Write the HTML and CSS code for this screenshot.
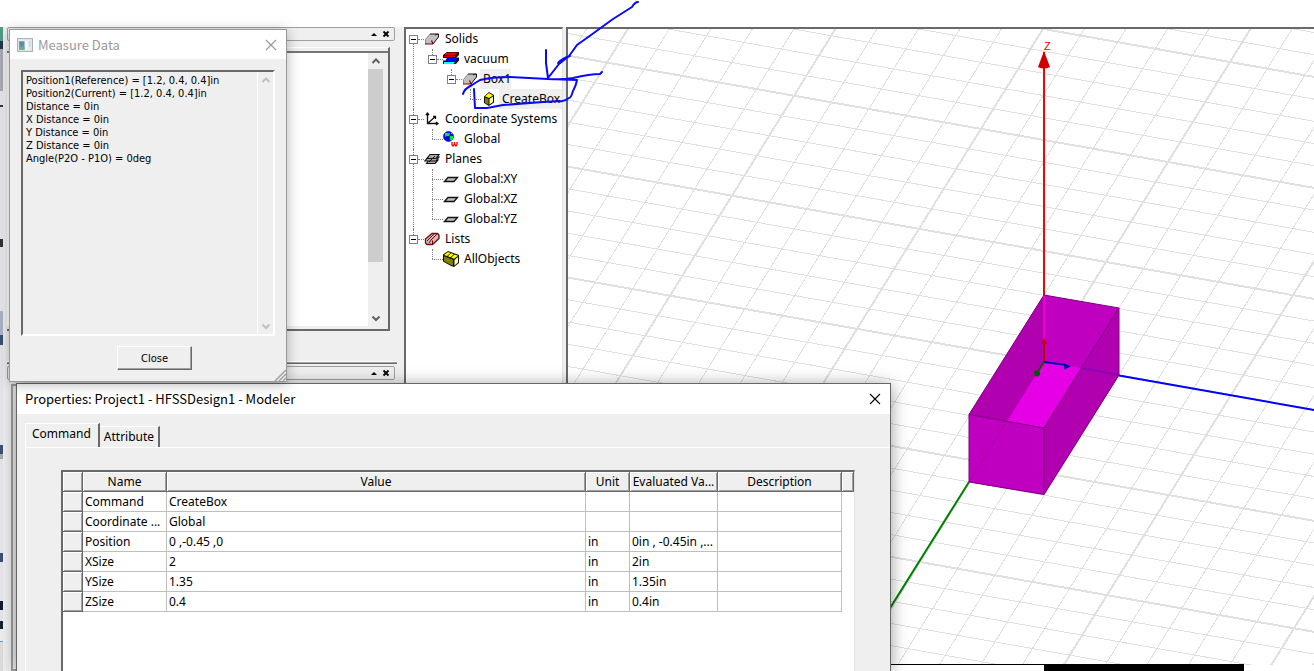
FILE: index.html
```html
<!DOCTYPE html>
<html lang="en">
<head>
<meta charset="utf-8">
<title>HFSSDesign1 - Modeler</title>
<link rel="stylesheet" href="styles.css">
</head>
<body>
<svg class="symbols" aria-hidden="true">
  <symbol id="i-solid" viewBox="0 0 16 16"><path d="M1.500 8.500 6 3H14.500V6L9 13H1.500z" fill="#c0c0c0"/><path d="M1.500 13V8.500L6 3" fill="none" stroke="#888"/><path d="M6 3H14.500V6L9 13" fill="none" stroke="#111"/><path d="M1 13H9M9 13 7.500 9.500M14 3 11 4" fill="none" stroke="#800000" stroke-width="1.200"/></symbol>
  <symbol id="i-material" viewBox="0 0 16 16"><path d="M4 1h12v3l-3 3H0V4z" fill="#111"/><path d="M4 1.500h10.500l-2 2.500H1.500z" fill="#e00"/><path d="M1 4.500h11V6H1z" fill="#c00"/><path d="M4 6.500h12v3L13 13H0V9.500h3z" fill="#111"/><path d="M4 7h10.500l-3 3.500H2z" fill="#00f"/><path d="M1 11h11l-1.500 2H1z" fill="#0ff"/></symbol>
  <symbol id="i-createbox" viewBox="0 0 16 16"><path d="M3 5.500 8 1l5 3v7.500L8 15l-5-3z" fill="#111"/><path d="M4 5.300 8 2l4 2.500L8 7z" fill="#ff0"/><path d="m4 6.500 3.500 1.500v5.500L4 12z" fill="#808000"/><path d="m8.500 8 3.500-2.500V11l-3.500 2.500z" fill="#ffffa0"/></symbol>
  <symbol id="i-axes" viewBox="0 0 16 16"><path d="M3.500 2v10.500H14M3.500 12.500l8-7M2 4l1.500-2L5 4M12 11l2 1.500-2 1.500M9 5.500h2.500V8" fill="none" stroke="#111" stroke-width="1.300"/></symbol>
  <symbol id="i-globe" viewBox="0 0 16 16"><circle cx="5.500" cy="5.500" r="5" fill="#00f" stroke="#00a" stroke-width=".6"/><path d="M2 2h5L6 5H4L2 6zM7 5h3v2l-1 3-2-1zM8 1l2 2H8z" fill="#0e2"/><path d="M9 11v3l1 1 1.500-2 1.500 2 1-1v-3M11.500 11v2" fill="none" stroke="#e00" stroke-width="1.300"/></symbol>
  <symbol id="i-planes" viewBox="0 0 16 16"><path d="M2.500 12.500 5 9h9l-3 3.500z" fill="#aaa" stroke="#111" stroke-width="1.200"/><path d="M.8 10 4 6h11l-3 4z" fill="#aaa" stroke="#111" stroke-width="1.200"/><path d="m3 7.500 3-4h9l-3 4z" fill="#aaa" stroke="#111" stroke-width="1.200"/><path d="m5 11 6-6" stroke="#111"/></symbol>
  <symbol id="i-plane" viewBox="0 0 16 16"><path d="M1.500 10.500 5 6.500h9.500L11 10.500z" fill="#c0c0c0" stroke="#111" stroke-width="1.300"/></symbol>
  <symbol id="i-lists" viewBox="0 0 16 16"><path d="M1.500 8 8 2.500h5.500L15 4v3.500L8.500 13.500H3L1.500 12z" fill="#c0c0c0" stroke="#800000" stroke-width="1.300"/><path d="m3 10 7-7M5 12l2-3 6-6M8.500 13V9.500" stroke="#800000" fill="none"/></symbol>
  <symbol id="i-objects" viewBox="0 0 16 16"><path d="M0 3.500 5 0l11 4v8l-5 4-3-1-8-4.500z" fill="#111"/><path d="M1 4 5 1l2.500 1L4 5zM4.800 5.300 8.200 2.300l2.500 1L7.500 6.300zM8.300 6.600 11.500 3.600l3.500 1.200L11 7.800z" fill="#ff0"/><path d="m1 5.200 9 3.600V14.500L8 14 1 10z" fill="#808000"/><path d="m11.500 9 3.500-3v5.500l-3.500 3z" fill="#ffffa0"/></symbol>
  <symbol id="i-up" viewBox="0 0 16 16"><path d="m4.500 10 3.500-3.500 3.500 3.500" fill="none" stroke="currentColor" stroke-width="2"/></symbol>
  <symbol id="i-down" viewBox="0 0 16 16"><path d="m4.500 6.500 3.500 3.500 3.500-3.500" fill="none" stroke="currentColor" stroke-width="2"/></symbol>
  <symbol id="i-close" viewBox="0 0 12 12"><path d="m1 1 10 10M11 1 1 11" fill="none" stroke="currentColor" stroke-width="1.100"/></symbol>
  <symbol id="i-pin" viewBox="0 0 8 8"><path d="M1 6h6L4 3z" fill="#000"/></symbol>
  <symbol id="i-dockclose" viewBox="0 0 8 8"><path d="m1.500 1.500 5 5m0-5-5 5" stroke="#000" stroke-width="1.800"/></symbol>
</svg>

<div class="app">
  <aside class="dock">
    <div class="edge" aria-hidden="true"></div>
    <div class="dock-column">
      <header class="dock-head">
        <button class="dock-button" aria-label="Collapse"><svg><use href="#i-pin"/></svg></button>
        <button class="dock-button" aria-label="Close panel"><svg><use href="#i-dockclose"/></svg></button>
      </header>
      <section class="list-panel">
        <div class="scrollbar">
          <svg><use href="#i-up"/></svg>
          <span class="thumb"></span>
          <svg><use href="#i-down"/></svg>
        </div>
      </section>
      <hr class="splitter">
      <header class="dock-head">
        <button class="dock-button" aria-label="Collapse"><svg><use href="#i-pin"/></svg></button>
        <button class="dock-button" aria-label="Close panel"><svg><use href="#i-dockclose"/></svg></button>
      </header>
      <section class="lower-panel"></section>
    </div>
  </aside>

  <nav class="model-tree" aria-label="Model">
    <ul class="tree">
      <li><div class="row"><button class="toggle" aria-label="Collapse Solids"></button><svg class="icon"><use href="#i-solid"/></svg><span class="label">Solids</span></div>
        <ul>
          <li><div class="row"><button class="toggle" aria-label="Collapse vacuum"></button><svg class="icon"><use href="#i-material"/></svg><span class="label">vacuum</span></div>
            <ul>
              <li><div class="row"><button class="toggle" aria-label="Collapse Box1"></button><svg class="icon"><use href="#i-solid"/></svg><span class="label selected">Box1</span></div>
                <ul>
                  <li><div class="row"><span class="branch"></span><svg class="icon"><use href="#i-createbox"/></svg><span class="label selected">CreateBox</span></div></li>
                </ul>
              </li>
            </ul>
          </li>
        </ul>
      </li>
      <li><div class="row"><button class="toggle" aria-label="Collapse Coordinate Systems"></button><svg class="icon"><use href="#i-axes"/></svg><span class="label">Coordinate Systems</span></div>
        <ul>
          <li><div class="row"><span class="branch"></span><svg class="icon"><use href="#i-globe"/></svg><span class="label">Global</span></div></li>
        </ul>
      </li>
      <li><div class="row"><button class="toggle" aria-label="Collapse Planes"></button><svg class="icon"><use href="#i-planes"/></svg><span class="label">Planes</span></div>
        <ul>
          <li><div class="row"><span class="branch"></span><svg class="icon"><use href="#i-plane"/></svg><span class="label">Global:XY</span></div></li>
          <li><div class="row"><span class="branch"></span><svg class="icon"><use href="#i-plane"/></svg><span class="label">Global:XZ</span></div></li>
          <li><div class="row"><span class="branch"></span><svg class="icon"><use href="#i-plane"/></svg><span class="label">Global:YZ</span></div></li>
        </ul>
      </li>
      <li><div class="row"><button class="toggle" aria-label="Collapse Lists"></button><svg class="icon"><use href="#i-lists"/></svg><span class="label">Lists</span></div>
        <ul>
          <li><div class="row"><span class="branch"></span><svg class="icon"><use href="#i-objects"/></svg><span class="label">AllObjects</span></div></li>
        </ul>
      </li>
    </ul>
  </nav>

  <main class="viewport">
    <svg class="scene" role="img" aria-label="Box on the modeling grid">
      <g transform="translate(-568 -29)">
        <g id="grid" shape-rendering="crispEdges"></g>
        <path d="M1044 295V52" stroke="#f00" stroke-width="2"/>
        <path d="M1044 51l-6 16q6 3 12 0z" fill="#d00000"/>
        <text class="axis-name" x="1044" y="50">Z</text>
        <path d="M1119 375.500 1500 443" stroke="#00f" stroke-width="2"/>
        <path d="M969 482 850 672" stroke="#008000" stroke-width="2"/>
        <path d="M1044 295 1119 308V375L1044 494.500 969 482V414.500z" fill="#c000c0"/>
        <path d="M1044 295V362L969 482V414.500z" fill="#b000b0"/>
        <path d="M1119 308V375L1044 494.500V428z" fill="#b000b0"/>
        <path d="M1044 362 1081 368 1044 428 1007 421.500z" fill="#e600e6"/>
        <path d="M969 414.500 1044 428V494.500L969 482z" fill="#c000c0"/>
        <path d="M969 482 1007 421" stroke="#a800a8" fill="none"/>
        <path d="M1081 368 1119 375" stroke="#9000b8" stroke-width="2"/>
        <path d="M1044 295 1119 308V375L1044 494.500 969 482V414.500zM969 414.500 1044 428V494.500M1044 428 1119 308" fill="none" stroke="#800080"/>
        <path d="M1044 296V340" stroke="#f000d0" stroke-width="2"/>
        <path d="M1044 362V344" stroke="#b00000" stroke-width="2"/><path d="M1044 338l-3 6h6z" fill="#d00000"/>
        <path d="m1044 362 22 3" stroke="#0000c0" stroke-width="2"/><path d="m1071 366.500-7-3v6z" fill="#0000b0"/>
        <path d="m1044 362-7 11" stroke="#006000" stroke-width="2"/><circle cx="1037" cy="373.500" r="3" fill="#005800"/>
        <path d="M567 665H1314V671H567z" fill="#fff"/>
        <path d="M567 664H1244V665H567z"/>
        <path d="M1044 664H1244V680H1044z"/>
      </g>
    </svg>
  </main>
</div>

<section class="window properties" role="dialog" aria-labelledby="prop-title">
  <header class="title-bar"><h2 id="prop-title">Properties: Project1 - HFSSDesign1 - Modeler</h2><button class="close" aria-label="Close properties"><svg><use href="#i-close"/></svg></button></header>
  <div class="tabs" role="tablist">
    <button class="tab active" role="tab" aria-selected="true">Command</button>
    <button class="tab" role="tab" aria-selected="false">Attribute</button>
  </div>
  <div class="tab-page">
    <div class="grid-box">
      <table>
        <colgroup><col class="c-head"><col class="c-name"><col><col class="c-unit"><col class="c-eval"><col class="c-desc"><col class="c-end"></colgroup>
        <thead><tr><th></th><th>Name</th><th>Value</th><th>Unit</th><th>Evaluated Va...</th><th>Description</th><th></th></tr></thead>
        <tbody>
          <tr><th></th><td>Command</td><td>CreateBox</td><td></td><td></td><td></td><td></td></tr>
          <tr><th></th><td>Coordinate ...</td><td>Global</td><td></td><td></td><td></td><td></td></tr>
          <tr><th></th><td>Position</td><td>0 ,-0.45 ,0</td><td>in</td><td>0in , -0.45in ,...</td><td></td><td></td></tr>
          <tr><th></th><td>XSize</td><td>2</td><td>in</td><td>2in</td><td></td><td></td></tr>
          <tr><th></th><td>YSize</td><td>1.35</td><td>in</td><td>1.35in</td><td></td><td></td></tr>
          <tr><th></th><td>ZSize</td><td>0.4</td><td>in</td><td>0.4in</td><td></td><td></td></tr>
        </tbody>
      </table>
    </div>
  </div>
</section>

<section class="window measure" role="dialog" aria-labelledby="measure-title">
  <header class="title-bar">
    <svg class="app-icon" viewBox="0 0 15 13"><rect x=".5" y=".5" width="14" height="12" fill="#e8ecf2" stroke="#a8b0b8"/><path d="M2 3h5v8H2z" fill="#5b8fa0"/><path d="M2 8h5v3H2z" fill="#6fae8e"/><path d="M8 3h2v8H8z" fill="#fff"/><path d="M11 3h2v5h-2z" fill="#d0d8d8"/></svg>
    <h2 id="measure-title">Measure Data</h2><button class="close" aria-label="Close measure data"><svg><use href="#i-close"/></svg></button>
  </header>
  <div class="measure-body">
    <div class="readout">
      <textarea readonly aria-label="Measurements">Position1(Reference) = [1.2, 0.4, 0.4]in
Position2(Current) = [1.2, 0.4, 0.4]in
Distance = 0in
X Distance = 0in
Y Distance = 0in
Z Distance = 0in
Angle(P2O - P1O) = 0deg</textarea>
      <div class="scrollbar disabled"><svg><use href="#i-up"/></svg><svg><use href="#i-down"/></svg></div>
    </div>
    <button class="push">Close</button>
  </div>
  <svg class="grip" viewBox="0 0 12 12"><path d="M1 12 12 1M5 12l7-7M9 12l3-3" stroke="#a0a0a0" stroke-width="1.500"/></svg>
</section>

<svg class="ink" aria-hidden="true">
  <path d="M638 2q-3 0-6 5l-19 12-22 16-14 10q-5 7-8 11l-10 8-11 14M570 56q-9 3-12 7l5-4M546 50v13l2 15M463 94q1-5 9-9l8-5q12-3 30-3l38 2 29 1q-1 6-4 11-2 7-4 7-5 4-9 3l-17 1-40 3-16 3H475L474 89M548 79q15 1 25-1 17-4 27-4l2-2"/>
</svg>
<script src="grid.js"></script>
</body>
</html>
```

FILE: styles.css
```css
* { box-sizing: border-box; }
html, body { height: 100%; }
body {
  margin: 0;
  overflow: hidden;
  background: #fff;
  color: #000;
  font: 12px/20px "Noto Sans", "Open Sans", sans-serif;
}
button { font: inherit; color: inherit; border: 0; padding: 0; background: none; }
h2 { margin: 0; font: 13px/20px "Noto Sans CJK SC", "Noto Sans", sans-serif; flex: 1; }
ul { list-style: none; margin: 0; padding: 0; }
.symbols { position: absolute; width: 0; height: 0; }

.app {
  height: 100%;
  padding-top: 27px;
  display: grid;
  grid-template-columns: 404px 159px 1fr;
}
.dock { display: flex; background: #efefef; min-height: 0; }
.edge {
  width: 3px;
  margin-right: 4px;
  background: linear-gradient(#4f9a86 0 14px, #203848 14px 22px, #a9abb4 22px 64px, #e4e6ea 64px 78px, #334 78px 80px, #e4e6ea 80px 212px, #333 212px 220px, #e4e6ea 220px 284px, #a8b4c8 284px 308px, #3c5078 308px 318px, #e4e6ea 318px 418px, #3c5078 418px 427px, #aaa 427px 432px, #e4e6ea 432px 526px, #3c5078 526px 535px, #e4e6ea 535px 574px, #141c30 574px 583px, #e4e6ea 583px 594px, #123 594px 602px, #eee 602px 614px, #4aa0e0 614px 615px, #ddd 615px);
}
.dock-column { flex: 1; display: flex; flex-direction: column; padding: 0 7px 0 0; }
.dock-head {
  height: 14px;
  margin-right: 2px;
  padding-right: 4px;
  border: 1px solid #a0a0a0;
  border-radius: 2px;
  display: flex;
  justify-content: flex-end;
  align-items: center;
  gap: 4px;
}
.dock-button, .dock-button svg { width: 8px; height: 8px; display: block; }
.list-panel {
  height: 284px;
  margin: 6px 7px 30px 0;
  padding: 1px;
  border-right: 2px solid #696969;
  border-bottom: 2px solid #696969;
  border-top: 1px solid #fff;
  box-shadow: inset 0 3px #efefef, inset 0 5px #777, inset -5px 0 #efefef, inset 0 -3px #efefef;
  background: #fff;
  display: flex;
  justify-content: flex-end;
}
.scrollbar {
  width: 16px;
  display: flex;
  flex-direction: column;
  justify-content: space-between;
  background: #efefef;
  color: #606060;
}
.scrollbar svg { width: 16px; height: 16px; flex: none; }
.list-panel .scrollbar { margin: 4px 4px 2px 0; width: 15px; }
.thumb { height: 193px; margin-bottom: auto; background: #cdcdcd; }
.disabled { color: #c0c0c0; border-left: 1px solid #fff; }
.splitter {
  width: 100%;
  height: 3px;
  margin: 0 0 2px;
  border: solid;
  border-width: 1px 0;
  border-color: #fff #696969 #696969;
  background: #a0a0a0;
}
.lower-panel { flex: 1; margin: 4px 7px 0 4px; border: 2px solid #a0a0a0; background: #efefef; }

.model-tree {
  overflow: hidden;
  background: #fff;
  border: solid #696969;
  border-width: 2px 1px 0 2px;
  border-right-color: #e3e3e3;
}
.tree { padding-left: 3px; }
.tree ul { padding-left: 19px; }
.tree li { position: relative; }
.tree li::before {
  content: "";
  position: absolute;
  left: 4px;
  top: 0;
  bottom: 0;
  border-left: 1px dotted #808080;
}
.tree li:last-child::before { bottom: auto; height: 10px; }
.tree > li:first-child::before { top: 10px; }
.row { display: flex; align-items: center; height: 20px; white-space: nowrap; }
.toggle {
  position: relative;
  flex: none;
  width: 9px;
  height: 9px;
  margin-right: 6px;
  border: 1px solid #808080;
  background: linear-gradient(#000, #000) center / 5px 1px no-repeat #fff;
}
.toggle::after { content: ""; position: absolute; left: 8px; top: 3px; width: 6px; border-top: 1px dotted #808080; }
.branch { flex: none; width: 11px; margin-left: 4px; border-top: 1px dotted #808080; }
.icon { flex: none; width: 16px; height: 16px; }
.label { padding-left: 3px; margin-left: 2px; }
.selected { background: #efefef; }
.row .branch ~ .selected { flex: 1; }

.viewport {
  min-width: 0;
  margin-left: 3px;
  border: solid #696969;
  border-width: 2px 0 0 2px;
  box-shadow: -3px 0 #efefef;
}
.scene { display: block; width: 100%; height: 100%; }
.grid-line { stroke: #e0e0e0; stroke-width: 1; }
.grid-line.major { stroke-width: 2; }
.axis-name { fill: #e00000; font: 11px "Liberation Sans", sans-serif; }

.window { position: absolute; display: flex; flex-direction: column; background: #efefef; }
.title-bar { display: flex; align-items: center; background: #fff; flex: none; }
.close, .close svg { width: 12px; height: 12px; display: block; }
.properties {
  left: 16px;
  top: 383px;
  bottom: 0;
  width: 875px;
  max-width: 98vw;
  border: 1px solid #666;
  border-bottom: 0;
  box-shadow: 0 2px 16px rgba(0, 0, 0, .4);
}
.properties .title-bar { height: 30px; padding: 0 9px 0 8px; }
.tabs { display: flex; align-items: flex-end; height: 33px; padding-left: 8px; }
.tab {
  height: 21px;
  padding: 0 4px;
  border: solid #fff;
  border-width: 1px 2px 0 0;
  border-right-color: #696969;
}
.tab.active { height: 24px; padding: 0 7px 4px 6px; border-left: 1px solid #fff; }
.tab-page {
  flex: 1;
  display: flex;
  margin-left: 8px;
  padding: 22px 35px 0 35px;
  border: solid #fff;
  border-width: 1px 0 0 1px;
}
.grid-box {
  flex: 1;
  background: #fff;
  border: solid #696969;
  border-width: 2px 1px 0 2px;
  border-right-color: #e3e3e3;
}
table { width: 100%; table-layout: fixed; border-collapse: separate; border-spacing: 0; }
.c-head { width: 20px; }
.c-name { width: 84px; }
.c-unit { width: 44px; }
.c-eval { width: 88px; }
.c-desc { width: 124px; }
.c-end { width: 12px; }
th, td { height: 20px; padding: 0 2px; line-height: 19px; font-weight: 400; white-space: nowrap; overflow: hidden; }
th { background: #efefef; border: solid #696969; border-width: 0 1px 1px 0; box-shadow: inset 1px 1px #fff, inset -1px -1px #a0a0a0; }
td { text-align: left; border: solid #bfbfbf; border-width: 0 1px 1px 0; }
td:last-child { border: 0; }

.measure {
  left: 9px;
  top: 29px;
  width: 278px;
  border: 1px solid #999;
  box-shadow: 0 2px 12px rgba(0, 0, 0, .3);
}
.measure .title-bar { height: 29px; padding: 0 9px 0 7px; color: #999; }
.app-icon { width: 16px; height: 14px; margin-right: 5px; }
.measure-body { display: flex; flex-direction: column; gap: 10px; padding: 11px; }
.readout {
  display: flex;
  width: 100%;
  height: 266px;
  border: 2px solid;
  border-color: #696969 #fff #fff #696969;
}
textarea {
  flex: 1;
  min-width: 0;
  resize: none;
  overflow: hidden;
  border: 0;
  outline: 0;
  padding: 2px 3px;
  background: transparent;
  color: #000;
  white-space: pre;
  font: 11px/13px "DejaVu Sans Condensed", "Noto Sans", sans-serif;
}
.push {
  width: 75px;
  height: 24px;
  margin-left: 96px;
  border: 1px solid;
  border-color: #fff #696969 #696969 #fff;
  box-shadow: inset -1px -1px #a0a0a0;
  font: 11px "DejaVu Sans Condensed", "Noto Sans", sans-serif;
}
.grip { position: absolute; right: 0; bottom: 0; width: 12px; height: 12px; }
.ink { position: absolute; left: 0; top: 0; width: 640px; height: 112px; pointer-events: none; }
.ink path { fill: none; stroke: #0a0af5; stroke-width: 2; stroke-linecap: round; stroke-linejoin: round; }
```

FILE: grid.js
```js
// Reference plane: cell edges seen from the camera, measured from the model origin.
const origin = { x: 1044, y: 362 };
const along = { x: 37.4, y: 6.63 };
const across = { x: -12.4, y: 20 };
const grid = document.getElementById("grid");

function addLine(start, direction, major) {
  const line = document.createElementNS("http://www.w3.org/2000/svg", "line");
  line.setAttribute("x1", start.x - direction.x * 60);
  line.setAttribute("y1", start.y - direction.y * 60);
  line.setAttribute("x2", start.x + direction.x * 60);
  line.setAttribute("y2", start.y + direction.y * 60);
  line.setAttribute("class", major ? "grid-line major" : "grid-line");
  grid.append(line);
}

for (let i = -40; i <= 40; i++) {
  const major = i % 5 === 0;
  addLine({ x: origin.x + along.x * i, y: origin.y + along.y * i }, across, major);
  addLine({ x: origin.x + across.x * i, y: origin.y + across.y * i }, along, major);
}
```
